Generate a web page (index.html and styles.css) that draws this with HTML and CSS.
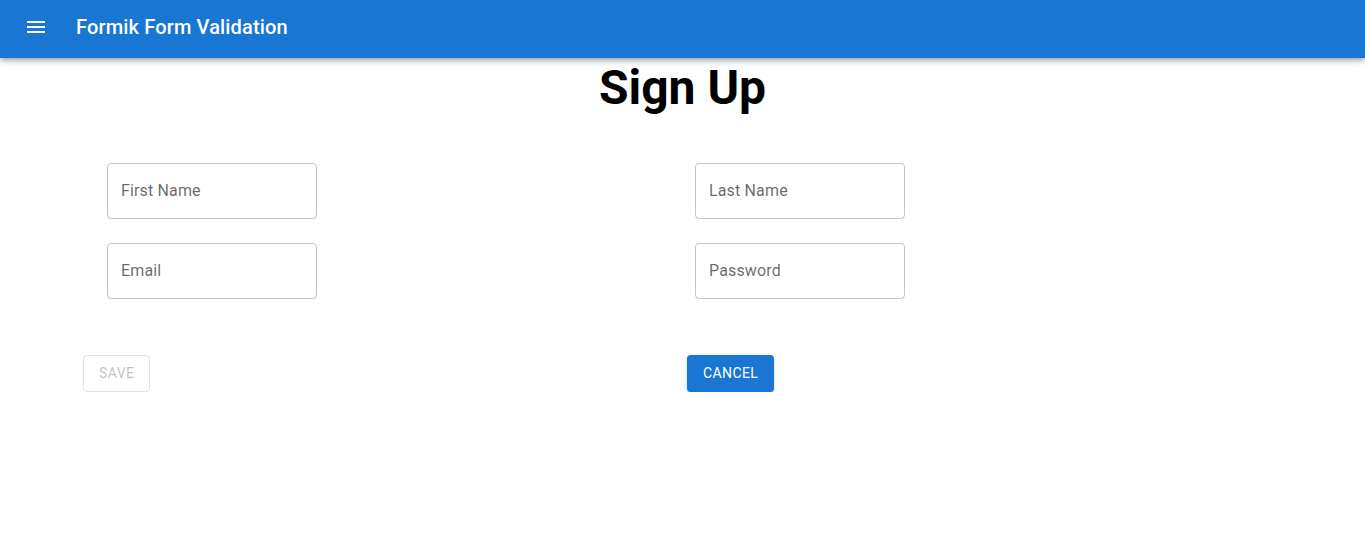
FILE: index.html
```html
<!DOCTYPE html>
<html lang="en">
<head>
<meta charset="utf-8">
<title>Formik Form Validation</title>
<link rel="stylesheet" href="styles.css">
</head>
<body>
<header class="appbar">
  <div class="toolbar">
    <span class="menu-btn">
      <svg class="menu-icon" viewBox="0 0 24 24" width="24" height="24"><path d="M3 18h18v-2H3v2zm0-5h18v-2H3v2zm0-7v2h18V6H3z" fill="#fff"/></svg>
    </span>
    <span class="title">Formik Form Validation</span>
  </div>
</header>
<main class="page">
  <h1 class="heading">Sign Up</h1>
  <form class="form">
    <div class="fields">
      <div class="field"><span class="label">First Name</span></div>
      <div class="field"><span class="label">Last Name</span></div>
      <div class="field"><span class="label">Email</span></div>
      <div class="field"><span class="label">Password</span></div>
    </div>
    <div class="actions">
      <div class="cell"><button type="button" class="btn btn-outlined" disabled>Save</button></div>
      <div class="cell"><button type="button" class="btn btn-contained">Cancel</button></div>
    </div>
  </form>
</main>
</body>
</html>
```
FILE: styles.css
```css
* { box-sizing: border-box; }
html, body { margin: 0; padding: 0; }
body {
  font-family: Roboto, "Liberation Sans", Arial, sans-serif;
  background: #fff;
  color: rgba(0,0,0,0.87);
}
.appbar {
  background: #1976d2;
  color: #fff;
  height: 58px;
  box-shadow: 0 2px 4px -1px rgba(0,0,0,0.2), 0 4px 5px 0 rgba(0,0,0,0.14), 0 1px 10px 0 rgba(0,0,0,0.12);
  position: relative;
  z-index: 2;
}
.toolbar {
  height: 54px;
  display: flex;
  align-items: center;
  padding-left: 24px;
}
.menu-btn { display: flex; width: 24px; height: 24px; margin-right: 28px; }
.menu-icon { display: block; }
.title {
  font-size: 20px;
  font-weight: 500;
  line-height: 1.6;
  letter-spacing: 0.0075em;
}
.heading {
  margin: 0;
  padding-top: 2px;
  text-align: center;
  font-size: 48px;
  font-weight: 700;
  line-height: 56px;
  color: #000;
}
.form { padding-top: 47px; }
.fields {
  display: grid;
  grid-template-columns: 588px 588px;
  row-gap: 24px;
  margin-left: 107px;
}
.field {
  width: 210px;
  height: 56px;
  border: 1px solid rgba(0,0,0,0.23);
  border-radius: 4px;
  display: flex;
  align-items: center;
  padding-left: 13px;
  padding-bottom: 2px;
}
.label {
  font-size: 16px;
  line-height: 1.4375em;
  color: rgba(0,0,0,0.6);
  letter-spacing: 0.00938em;
}
.actions {
  display: grid;
  grid-template-columns: 604px 604px;
  margin-left: 83px;
  margin-top: 56px;
}
.btn {
  font-family: Roboto, "Liberation Sans", Arial, sans-serif;
  font-size: 14px;
  font-weight: 400;
  line-height: 1.75;
  letter-spacing: 0.02857em;
  text-transform: uppercase;
  border-radius: 4px;
  min-width: 64px;
  height: 37px;
  cursor: pointer;
}
.btn-outlined {
  background: transparent;
  border: 1px solid rgba(0,0,0,0.12);
  color: rgba(0,0,0,0.26);
  padding: 5px 15px;
  cursor: default;
}
.btn-contained {
  background: #1976d2;
  border: 0;
  color: #fff;
  padding: 6px 16px;
  box-shadow: 0 3px 1px -2px rgba(0,0,0,0.2), 0 2px 2px 0 rgba(0,0,0,0.14), 0 1px 5px 0 rgba(0,0,0,0.12);
}
```
